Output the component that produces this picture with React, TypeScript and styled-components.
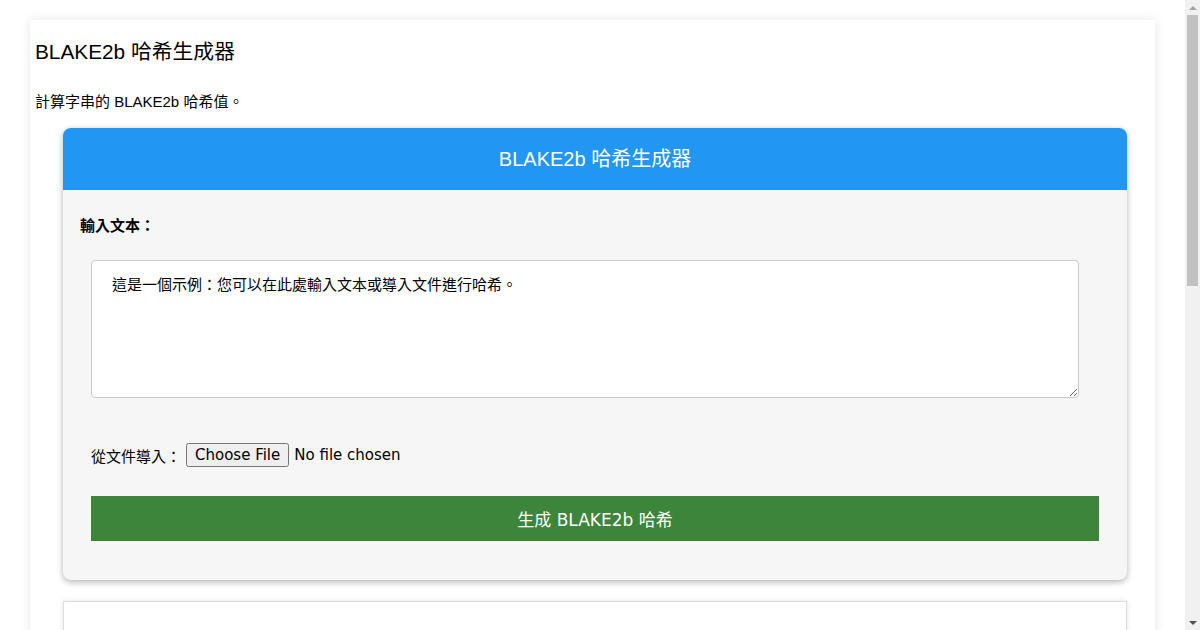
import React from "react";
import styled, { createGlobalStyle } from "styled-components";

const GlobalStyle = createGlobalStyle`
  html, body {
    margin: 0;
    padding: 0;
    background: #ffffff;
    overflow: hidden;
  }
  body {
    font-family: Arial, "Liberation Sans", "Noto Sans CJK TC", sans-serif;
    color: #000;
  }
`;

const Window = styled.div`
  display: flex;
  height: 100vh;
  overflow: hidden;
`;

const ContentPane = styled.div`
  flex: 1;
  min-width: 0;
  overflow: hidden;
`;

const ScrollTrack = styled.div`
  width: 15px;
  flex-shrink: 0;
  background: #f1f1f1;
  display: flex;
  flex-direction: column;
  align-items: center;
`;

const ScrollArrow = styled.div<{ $dir: "up" | "down"; $dim?: boolean }>`
  width: 15px;
  height: 15px;
  display: flex;
  align-items: center;
  justify-content: center;
  &::after {
    content: "";
    width: 0;
    height: 0;
    border-left: 4px solid transparent;
    border-right: 4px solid transparent;
    ${(p) =>
      p.$dir === "up"
        ? `border-bottom: 4px solid ${p.$dim ? "#a3a3a3" : "#505050"};`
        : `border-top: 4px solid ${p.$dim ? "#a3a3a3" : "#505050"};`}
  }
`;

const ScrollThumb = styled.div`
  width: 11px;
  height: 271px;
  background: #c1c1c1;
`;

const ScrollSpacer = styled.div`
  flex: 1;
`;

const Page = styled.div`
  padding: 20px 30px 40px;
`;

const Container = styled.main`
  background: #ffffff;
  box-shadow: 0 0 10px rgba(0, 0, 0, 0.1);
  padding: 1px 5px 40px;
`;

const Title = styled.h1`
  font-size: 20.8px;
  font-weight: normal;
  margin: 14px 0 25px;
`;

const Intro = styled.p`
  font-size: 15px;
  margin: 0 0 17px;
`;

const ToolCard = styled.section`
  margin: 0 23px 21px 28px;
  border-radius: 8px;
  overflow: hidden;
  box-shadow: 0 2px 6px rgba(0, 0, 0, 0.3);
  background: #f6f6f6;
`;

const ToolHeader = styled.header`
  background: #2196f3;
  color: #ffffff;
  height: 62px;
  box-sizing: border-box;
  padding-bottom: 4px;
  display: flex;
  align-items: center;
  justify-content: center;
  font-size: 20px;
`;

const ToolBody = styled.div`
  padding: 24px 17px 39px;
`;

const FieldLabel = styled.label`
  display: block;
  font-weight: bold;
  font-size: 15px;
  margin-bottom: 25px;
`;

const Group = styled.div`
  padding: 0 11px;
`;

const TextArea = styled.textarea`
  display: block;
  width: 98%;
  height: 138px;
  box-sizing: border-box;
  padding: 12px 20px;
  border: 1px solid #cccccc;
  border-radius: 4px;
  background: #ffffff;
  font-family: inherit;
  font-size: 15px;
  color: #000;
  resize: vertical;
`;

const FileRow = styled.div`
  display: flex;
  align-items: center;
  margin: 45px 0 29px;
  font-size: 15px;
`;

const FileInput = styled.input`
  font-family: "DejaVu Sans", sans-serif;
  font-size: 15px;
  margin-left: 5px;
  &::file-selector-button {
    font-family: "DejaVu Sans", sans-serif;
    font-size: 15px;
    padding: 1px 7px;
    margin-right: 5px;
  }
`;

const GenerateButton = styled.button`
  display: block;
  width: 100%;
  height: 45px;
  border: none;
  background: #3c853a;
  color: #ffffff;
  font-family: "DejaVu Sans", "Noto Sans CJK TC", sans-serif;
  font-size: 17px;
  cursor: pointer;
`;

const ResultCard = styled.section`
  margin: 0 23px 0 28px;
  background: #ffffff;
  border: 1px solid #dddddd;
  box-shadow: 0 0 6px rgba(0, 0, 0, 0.1);
  min-height: 900px;
`;

export default function App() {
  return (
    <>
      <GlobalStyle />
      <Window>
        <ContentPane>
          <Page>
            <Container>
              <Title>BLAKE2b 哈希生成器</Title>
              <Intro>計算字串的 BLAKE2b 哈希值。</Intro>
              <ToolCard>
                <ToolHeader>BLAKE2b 哈希生成器</ToolHeader>
                <ToolBody>
                  <FieldLabel htmlFor="input-text">輸入文本：</FieldLabel>
                  <Group>
                    <TextArea
                      id="input-text"
                      defaultValue="這是一個示例：您可以在此處輸入文本或導入文件進行哈希。"
                    />
                    <FileRow>
                      <span>從文件導入：</span>
                      <FileInput type="file" />
                    </FileRow>
                    <GenerateButton type="button">生成 BLAKE2b 哈希</GenerateButton>
                  </Group>
                </ToolBody>
              </ToolCard>
              <ResultCard aria-label="哈希結果" />
            </Container>
          </Page>
        </ContentPane>
        <ScrollTrack aria-hidden="true">
          <ScrollArrow $dir="up" $dim />
          <ScrollThumb />
          <ScrollSpacer />
          <ScrollArrow $dir="down" />
        </ScrollTrack>
      </Window>
    </>
  );
}
